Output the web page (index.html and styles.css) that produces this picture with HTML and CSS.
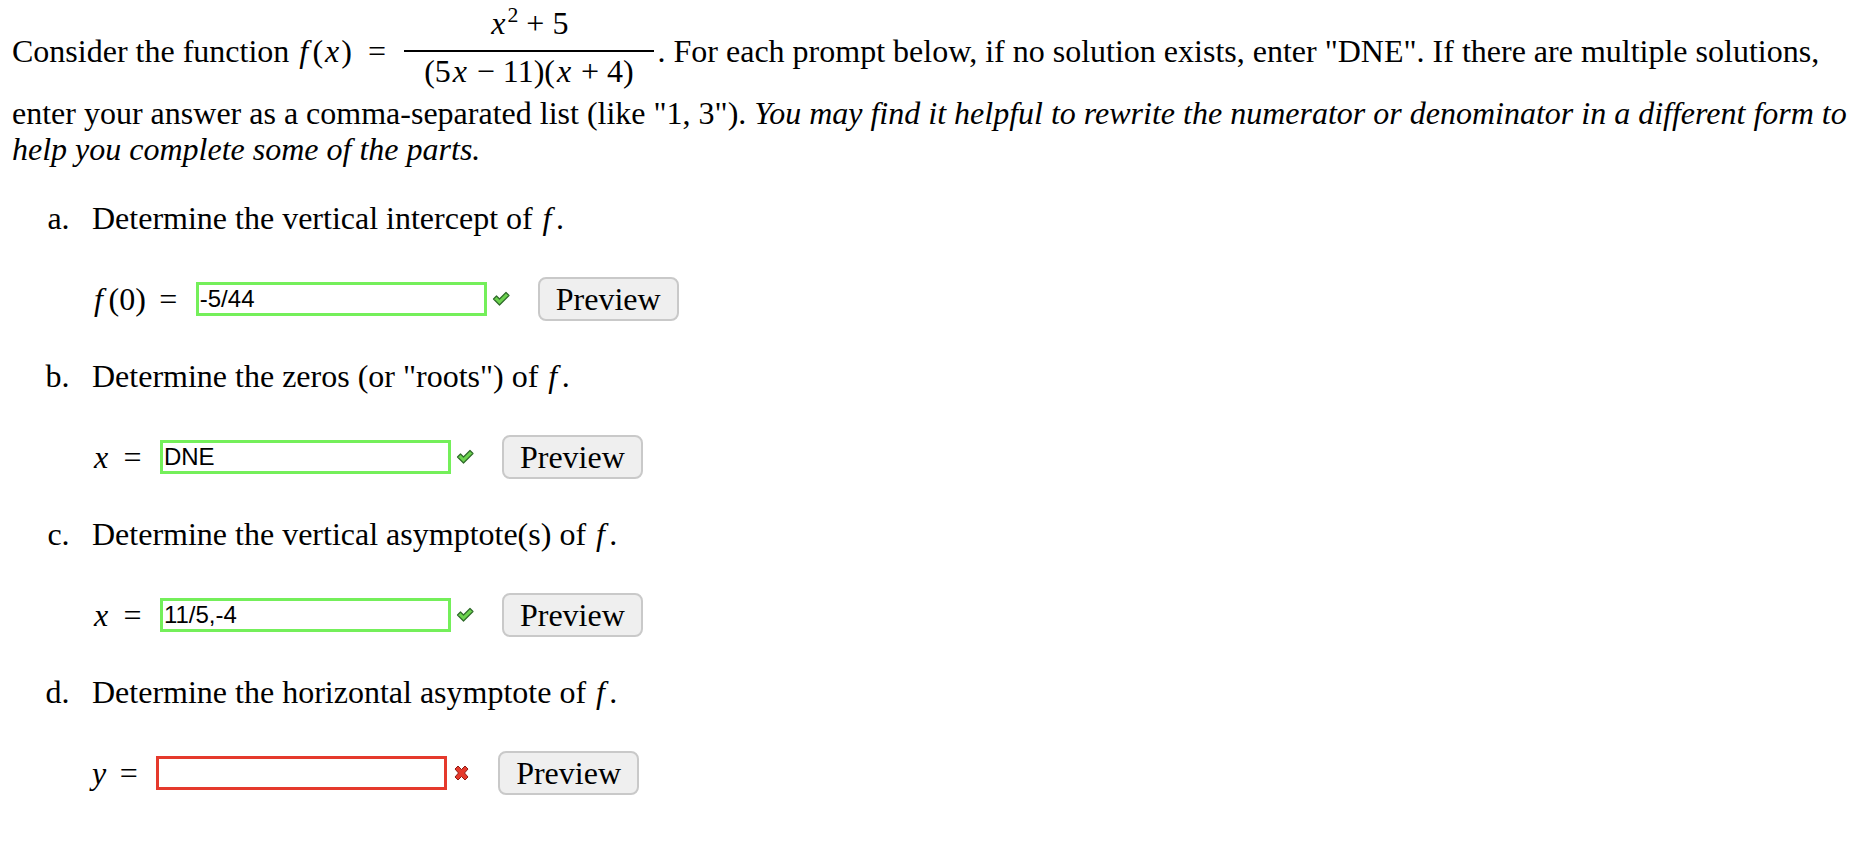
FILE: index.html
```html
<!DOCTYPE html>
<html lang="en">
<head>
<meta charset="utf-8">
<title>Problem</title>
<link rel="stylesheet" href="styles.css">
</head>
<body>
<div class="problem">
  <p class="intro">Consider the function <span class="math"><span class="v f">f</span>(<span class="v">x</span>)<span class="op">=</span><span class="frac"><span class="num"><span class="v">x</span><sup>2</sup><span class="op">+</span>5</span><span class="den">(5<span class="v">x</span><span class="op">&minus;</span>11)(<span class="v">x</span><span class="op">+</span>4)</span></span></span>. For each prompt below, if no solution exists, enter "DNE". If there are multiple solutions, enter your answer as a comma-separated list (like "1, 3"). <em>You may find it helpful to rewrite the numerator or denominator in a different form to help you complete some of the parts.</em></p>
  <ol class="parts">
    <li>
      <p class="q">Determine the vertical intercept of <span class="v f">f</span>.</p>
      <div class="answer">
        <span class="math"><span class="v f">f</span>(0)<span class="op">=</span></span>
        <input class="ans correct" type="text" value="-5/44">
        <span class="mark"><svg width="18" height="16" viewBox="0 0 18 16"><polygon points="1.5,8 4.5,5 7.5,8 14,1.5 17,4.5 7.5,14" fill="#6cd34f" stroke="#2f6a2a" stroke-width="1.2" stroke-linejoin="round"/></svg></span>
        <button class="preview" type="button">Preview</button>
      </div>
    </li>
    <li>
      <p class="q">Determine the zeros (or "roots") of <span class="v f">f</span>.</p>
      <div class="answer">
        <span class="math"><span class="v">x</span><span class="op">=</span></span>
        <input class="ans correct" type="text" value="DNE">
        <span class="mark"><svg width="18" height="16" viewBox="0 0 18 16"><polygon points="1.5,8 4.5,5 7.5,8 14,1.5 17,4.5 7.5,14" fill="#6cd34f" stroke="#2f6a2a" stroke-width="1.2" stroke-linejoin="round"/></svg></span>
        <button class="preview" type="button">Preview</button>
      </div>
    </li>
    <li>
      <p class="q">Determine the vertical asymptote(s) of <span class="v f">f</span>.</p>
      <div class="answer">
        <span class="math"><span class="v">x</span><span class="op">=</span></span>
        <input class="ans correct" type="text" value="11/5,-4">
        <span class="mark"><svg width="18" height="16" viewBox="0 0 18 16"><polygon points="1.5,8 4.5,5 7.5,8 14,1.5 17,4.5 7.5,14" fill="#6cd34f" stroke="#2f6a2a" stroke-width="1.2" stroke-linejoin="round"/></svg></span>
        <button class="preview" type="button">Preview</button>
      </div>
    </li>
    <li>
      <p class="q">Determine the horizontal asymptote of <span class="v f">f</span>.</p>
      <div class="answer">
        <span class="math"><span class="v y">y</span><span class="op">=</span></span>
        <input class="ans incorrect" type="text" value="">
        <span class="mark"><svg width="15" height="16" viewBox="0 0 15 16"><polygon points="1,4 4,1 7.5,4.5 11,1 14,4 10.5,8 14,12 11,15 7.5,11.5 4,15 1,12 4.5,8" fill="#e5392c" stroke="#8e1b13" stroke-width="1" stroke-linejoin="round"/></svg></span>
        <button class="preview" type="button">Preview</button>
      </div>
    </li>
  </ol>
</div>
</body>
</html>
```
FILE: styles.css
```css
body {
  margin: 0;
  background: #fff;
  color: #000;
  font-family: "Liberation Serif", "Times New Roman", serif;
  font-size: 32px;
}

.problem {
  padding: 6px 8px 0 12px;
}

.intro {
  margin: 0;
  line-height: 36px;
}

.intro em {
  font-style: italic;
}

.math {
  white-space: nowrap;
}

.v {
  font-style: italic;
  padding: 0 0.06em;
}

.v.f {
  padding: 0 0.14em 0 0.06em;
}

.v.y {
  padding: 0;
}

.op {
  margin: 0 0.3em;
}

.intro .math > .op {
  margin: 0 0.45em 0 0.5em;
}

.frac {
  display: inline-block;
  vertical-align: -20px;
  text-align: center;
  margin: 0 0.12em;
}

.num {
  display: block;
  line-height: 34px;
  padding: 0 20px 10px;
  border-bottom: 2px solid #000;
}

.num sup {
  font-size: 0.68em;
  line-height: 0;
  vertical-align: 0.55em;
}

.den {
  display: block;
  line-height: 34px;
  padding: 2px 20px 7px;
}

.frac .op {
  margin: 0 0.25em;
}

.parts {
  margin: 33px 0 0;
  padding-left: 80px;
  list-style: lower-alpha;
  line-height: 36px;
}

.parts li {
  margin-bottom: 37px;
}

.parts li::marker {
  content: counter(list-item, lower-alpha) ".\2002\2009";
}

.q {
  margin: 0;
}

.answer {
  display: flex;
  align-items: center;
  margin-top: 41px;
  height: 44px;
}

.answer .v.f {
  padding: 0 0.18em 0 0.06em;
}

.answer .op {
  margin: 0 0.42em;
}

.ans {
  box-sizing: border-box;
  width: 291px;
  height: 34px;
  margin: 0 0 0 5px;
  padding: 0 1px;
  border: 3px solid #74ef5a;
  background: #fff;
  font-family: "Liberation Sans", Arial, sans-serif;
  font-size: 24px;
  color: #000;
  outline: none;
}

.ans.incorrect {
  border-color: #e5392c;
}

.mark {
  display: flex;
  align-items: center;
  justify-content: center;
  width: 18px;
  margin: 0 28px 0 5px;
}

.preview {
  box-sizing: border-box;
  height: 44px;
  padding: 2px 16px;
  border: 2px solid #c9c9c9;
  border-radius: 8px;
  background: #efefef;
  font-family: "Liberation Serif", "Times New Roman", serif;
  font-size: 32px;
  line-height: 36px;
  color: #000;
}
```
